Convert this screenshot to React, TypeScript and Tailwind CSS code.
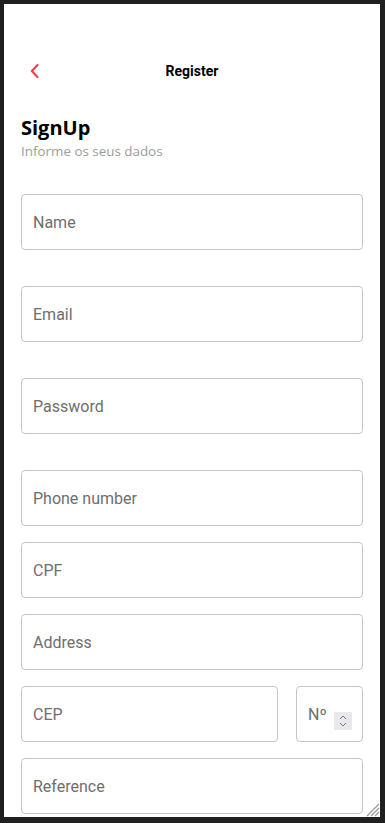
import React from "react";

const inputCls =
  "block w-full h-[56px] rounded-[4px] border border-[#c4c4c4] bg-white px-[11px] text-[16px] text-[#222] placeholder:text-[#6e6e6e] outline-none";

function Field({ placeholder, className = "" }: { placeholder: string; className?: string }) {
  return (
    <div className={className}>
      <input className={inputCls} placeholder={placeholder} style={{ fontFamily: "Roboto, 'Liberation Sans', sans-serif" }} />
    </div>
  );
}

export default function App() {
  return (
    <div className="h-[823px] w-[385px] bg-[#202020] pt-[4px] pl-[4px] pr-[5px] pb-[6px]">
      <div className="relative h-full w-full overflow-hidden bg-white">
        <div className="pt-[39px] px-[17px]">
          <div className="relative flex h-[56px] items-center justify-center">
            <svg className="absolute left-[9px] top-[21px]" width="10" height="14" viewBox="0 0 10 14">
              <path d="M7.5 1 L1.8 7 L7.5 13" fill="none" stroke="#f23a4f" strokeWidth="2" strokeLinecap="round" strokeLinejoin="round" />
            </svg>
            <span className="text-[14px] font-bold text-black" style={{ fontFamily: "Roboto, 'Liberation Sans', sans-serif" }}>
              Register
            </span>
          </div>
          <div className="mt-[15px]" style={{ fontFamily: "'Open Sans', 'Noto Sans', sans-serif" }}>
            <div className="text-[20px] leading-[28px] font-bold text-black">SignUp</div>
            <div className="text-[13.4px] leading-[18px] text-[#9c9c9c]">Informe os seus dados</div>
          </div>
          <div className="mt-[34px]">
            <Field placeholder="Name" className="mb-[36px]" />
            <Field placeholder="Email" className="mb-[36px]" />
            <Field placeholder="Password" className="mb-[36px]" />
            <Field placeholder="Phone number" className="mb-[16px]" />
            <Field placeholder="CPF" className="mb-[16px]" />
            <Field placeholder="Address" className="mb-[16px]" />
            <div className="mb-[16px] flex gap-[18px]">
              <Field placeholder="CEP" className="flex-1" />
              <div className="relative w-[67px]">
                <input className={inputCls} placeholder="Nº" style={{ fontFamily: "Roboto, 'Liberation Sans', sans-serif" }} />
                <div className="absolute right-[11px] top-[26px] flex h-[18px] w-[18px] flex-col items-center justify-center bg-[#e9e9ed]">
                  <svg width="10" height="14" viewBox="0 0 10 14">
                    <path d="M2 5 L5 2 L8 5" fill="none" stroke="#7a7a7a" strokeWidth="1" />
                    <path d="M2 9 L5 12 L8 9" fill="none" stroke="#7a7a7a" strokeWidth="1" />
                  </svg>
                </div>
              </div>
            </div>
            <Field placeholder="Reference" />
          </div>
        </div>
        <svg className="absolute bottom-0 right-0" width="16" height="16" viewBox="0 0 16 16">
          <path d="M15 3 L3 15 M15 7 L7 15 M15 11 L11 15" stroke="#9a9a9a" strokeWidth="1.3" />
        </svg>
      </div>
    </div>
  );
}
